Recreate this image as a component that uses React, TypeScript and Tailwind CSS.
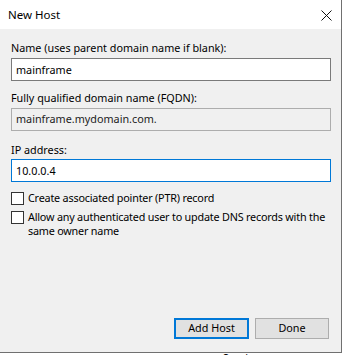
import { useState } from "react";

const font = { fontFamily: '"Noto Sans", "Segoe UI", sans-serif' };

function CheckRow({ label }: { label: React.ReactNode }) {
  const [checked, setChecked] = useState(false);
  return (
    <label className="flex items-start gap-[4px] cursor-default">
      <span
        onClick={() => setChecked(!checked)}
        className="mt-[1px] w-[13px] h-[13px] shrink-0 border border-[#333333] bg-white flex items-center justify-center"
      >
        {checked && (
          <svg width="9" height="9" viewBox="0 0 9 9" fill="none" stroke="#000" strokeWidth="1.4">
            <path d="M1 4.5 L3.5 7 L8 1.5" />
          </svg>
        )}
      </span>
      <span className="leading-[14px] whitespace-nowrap tracking-[-0.2px]">{label}</span>
    </label>
  );
}

export default function App() {
  const [name, setName] = useState("mainframe");
  const [ip, setIp] = useState("10.0.0.4");

  return (
    <div className="w-[342px] h-[355px] overflow-hidden bg-white text-[10.8px] text-black" style={font}>
      <div className="w-[342px] h-[353px] flex flex-col border-r border-b border-[#707070]">
        {/* title bar */}
        <div className="h-[29px] shrink-0 bg-white flex items-center justify-between pl-[8px] pr-[9px] pt-[1px]">
          <span className="text-[11.5px]">New Host</span>
          <svg width="11" height="11" viewBox="0 0 11 11" stroke="#111" strokeWidth="1">
            <path d="M0.5 0.5 L10.5 10.5 M10.5 0.5 L0.5 10.5" />
          </svg>
        </div>

        {/* body */}
        <div className="flex-1 bg-[#f0f0f0] flex flex-col px-[11px] pt-[11px] pb-[13px]">
          <div className="leading-[15px]">Name (uses parent domain name if blank):</div>
          <input
            value={name}
            onChange={(e) => setName(e.target.value)}
            className="mt-[3px] h-[23px] w-[320px] border border-[#7a7a7a] bg-white px-[4px] outline-none"
          />

          <div className="mt-[9px] leading-[15px]">Fully qualified domain name (FQDN):</div>
          <div className="mt-[3px] h-[23px] w-[320px] border border-[#adadad] bg-[#f0f0f0] px-[4px] flex items-center text-[#222]">
            {name ? name : ""}.mydomain.com.
          </div>

          <div className="mt-[11px] leading-[15px]">IP address:</div>
          <input
            value={ip}
            onChange={(e) => setIp(e.target.value)}
            className="mt-[2px] h-[23px] w-[320px] border border-[#0078d7] bg-white px-[4px] outline-none"
          />

          <div className="mt-[9px] flex flex-col gap-[5px]">
            <CheckRow label="Create associated pointer (PTR) record" />
            <CheckRow
              label={
                <>
                  Allow any authenticated user to update DNS records with the
                  <br />
                  same owner name
                </>
              }
            />
          </div>

          <div className="mt-auto flex justify-end gap-[6px]">
            <button className="w-[75px] h-[21px] bg-[#e1e1e1] border border-[#0078d7] outline outline-1 outline-[#0078d7] -outline-offset-2">
              Add Host
            </button>
            <button className="w-[74px] h-[21px] bg-[#e1e1e1] border border-[#adadad] mr-[1px]">
              Done
            </button>
          </div>
        </div>
      </div>

      {/* window behind the dialog */}
      <div className="h-[2px] flex leading-[12px] text-[11px]">
        <span className="pl-[1px] -mt-[1px]">ces</span>
        <span className="ml-[205px] -mt-[1px]">Services</span>
      </div>
    </div>
  );
}
